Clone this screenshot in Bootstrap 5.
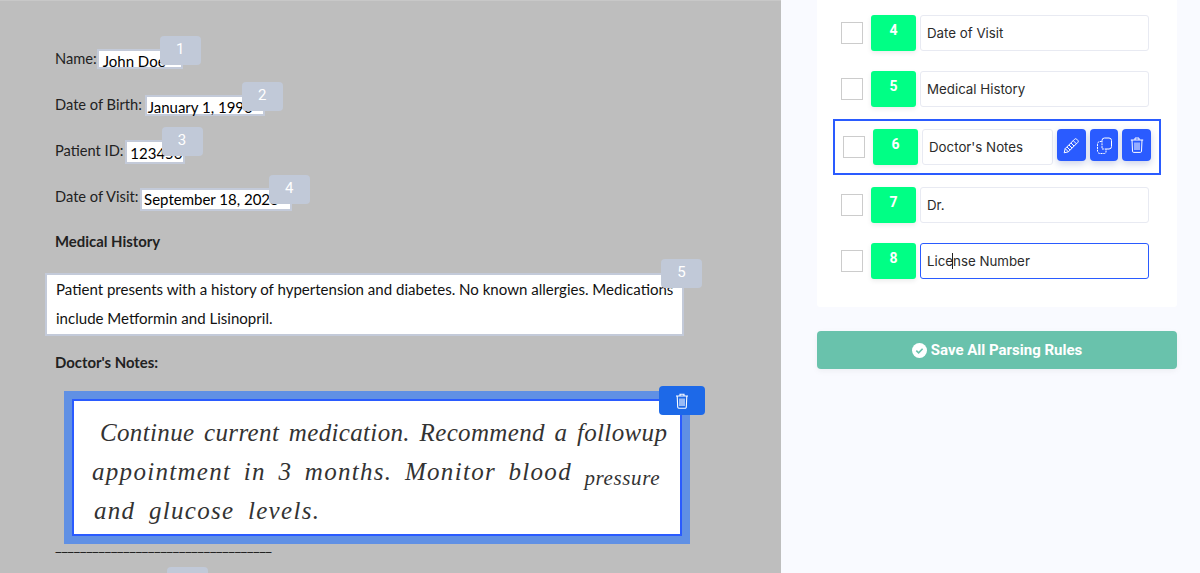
<!DOCTYPE html>
<html lang="en">
  <head>
    <meta charset="UTF-8" />
    <meta name="viewport" content="width=device-width, initial-scale=1" />
    <title>Parsing Rules</title>
    <link href="https://cdn.jsdelivr.net/npm/bootstrap@5.3.0/dist/css/bootstrap.min.css" rel="stylesheet" />
    <style>
      body { background: #f9faff; overflow: hidden; }
      .app-shell { height: 573px; }
      .doc-pane {
        width: 781px;
        height: 573px;
        background: #bebebe;
        box-shadow: inset 0 1px 0 #c8c8c8;
        font-family: Lato, "Liberation Sans", sans-serif;
        font-size: 14.67px;
        color: #222;
        padding: 0 0 0 55px;
      }
      .doc-row { height: 46px; line-height: 20px; }
      .doc-row:first-child { margin-top: 50px; }
      .doc-row.is-tight { height: 44px; }
      .doc-label { position: relative; top: -1px; }
      .doc-field {
        position: relative;
        display: inline-block;
        background: #fff;
        border: 2px solid #c3cad9;
        color: #000;
        font-size: 15px;
        vertical-align: top;
      }
      .field-name { margin-top: -1px; height: 20px; line-height: 20px; padding: 0 15px 0 4px; }
      .field-birth { margin: -1px 0 0 -1px; height: 21px; line-height: 20px; padding: 0 10px 0 1px; }
      .field-id { margin: -2px 0 0 -2px; height: 24px; line-height: 22px; padding: 0 0 0 3px; }
      .field-visit { margin-left: -2px; height: 23px; line-height: 18px; padding: 0 11px 0 2px; }
      .field-next { width: 135px; height: 21px; margin-top: 5px; }
      .doc-head { font-size: 14.9px; font-weight: 700; height: 41px; line-height: 18px; }
      .doc-head.is-notes { height: 38px; margin-top: 17px; }
      .doc-para {
        position: relative;
        width: 639px;
        height: 63px;
        margin-left: -10px;
        background: #fff;
        border: 2px solid #c3cad9;
        color: #111;
        font-size: 15.05px;
        padding: 0 9px;
        line-height: 29px;
        white-space: nowrap;
      }
      .tag-chip {
        position: absolute;
        top: -15px;
        right: -20px;
        width: 41px;
        height: 29px;
        background: #c1c9d8;
        border-radius: 4px;
        color: #fff;
        font-family: Roboto, sans-serif;
        font-size: 15px;
        line-height: 26px;
        text-align: center;
      }
      .doc-para .tag-chip { top: -16px; }
      .scan-box {
        position: relative;
        width: 626px;
        height: 153px;
        margin-left: 9px;
        border: 8px solid #6090e4;
      }
      .scan-inner {
        height: 100%;
        background: #fff;
        border: 2px solid #2a5bff;
        color: #333;
        font-family: "Liberation Serif", serif;
        font-style: italic;
        font-size: 25px;
        line-height: 39px;
        padding: 12px 0 0 26px;
        white-space: nowrap;
      }
      .scan-line1 { letter-spacing: .35px; word-spacing: 3px; }
      .scan-line2 { margin-left: -8px; letter-spacing: 1.3px; word-spacing: 5px; }
      .scan-line3 { margin-left: -6px; letter-spacing: 1.3px; word-spacing: 6px; }
      .scan-small { font-size: 21px; line-height: 0; vertical-align: -5px; letter-spacing: .6px; }
      .scan-del {
        position: absolute;
        top: -13px;
        right: -23px;
        width: 46px;
        height: 29px;
        background: #1d69e8;
        border-radius: 4px;
      }
      .doc-rule { line-height: 10px; height: 34px; color: #222; margin-top: -3px; white-space: nowrap; letter-spacing: -.54px; }
      .rules-pane {
        width: 419px;
        padding: 0 23px 0 36px;
        font-family: Inter, Roboto, sans-serif;
      }
      .rules-card { background: #fff; border-radius: 0 0 3px 3px; padding: 15px 28px 28px 24px; }
      .rule-row { height: 36px; margin-bottom: 20px; }
      .rule-row.is-last { margin-bottom: 0; }
      .rule-row.is-active {
        height: 56px;
        width: 328px;
        margin: -8px 0 12px -8px;
        padding: 8px 8px 0 8px;
        border: 2px solid #2a5bff;
        align-items: flex-start !important;
      }
      .rule-check {
        flex: none;
        width: 22px;
        height: 22px;
        border: 1px solid #ccc;
        background: #fff;
        margin-right: 8px;
      }
      .is-active .rule-check { margin-top: 7px; }
      .rule-num {
        flex: none;
        width: 45px;
        height: 36px;
        margin-right: 4px;
        background: #00ff85;
        border-radius: 3px;
        box-shadow: 0 2px 5px rgba(0, 0, 0, .08);
        color: #fff;
        font-family: Roboto, sans-serif;
        font-weight: 700;
        font-size: 14px;
        line-height: 30px;
        text-align: center;
      }
      .rule-input.form-control {
        width: 229px;
        height: 36px;
        padding: 0 6px;
        border: 1px solid #e8eaf2;
        border-radius: 3px;
        color: #2b2b2b;
        font-size: 13.3px;
      }
      .is-active .rule-input.form-control { width: 131px; }
      .rule-input.is-focus.form-control { border-color: #2a5bff; }
      .rule-caret { position: absolute; left: 32px; top: 10px; width: 1px; height: 16px; background: #222; }
      .rule-tool.btn {
        flex: none;
        width: 29px;
        height: 32px;
        padding: 0;
        margin-left: 4px;
        background: #2a5bff;
        border: 0;
        border-radius: 4px;
        box-shadow: 0 3px 7px rgba(30, 60, 160, .22);
      }
      .rule-tool.btn.is-mid { width: 28px; }
      .save-btn.btn {
        margin-top: 24px;
        height: 38px;
        padding: 0;
        background: #69c2ac;
        border: 0;
        border-radius: 4px;
        color: #fff;
        font-family: Roboto, sans-serif;
        font-weight: 700;
        font-size: 15px;
        box-shadow: 0 2px 6px rgba(0, 0, 0, .05);
      }
    </style>
  </head>
  <body>
    <div class="app-shell d-flex overflow-hidden">
      <!-- document preview -->
      <div class="doc-pane overflow-hidden">
        <div class="doc-row"><span class="doc-label">Name:</span><span class="doc-field field-name">John Doe<span class="tag-chip">1</span></span></div>
        <div class="doc-row"><span class="doc-label">Date of Birth:</span> <span class="doc-field field-birth">January 1, 1990<span class="tag-chip">2</span></span></div>
        <div class="doc-row"><span class="doc-label">Patient ID:</span> <span class="doc-field field-id">123456<span class="tag-chip">3</span></span></div>
        <div class="doc-row is-tight"><span class="doc-label">Date of Visit:</span> <span class="doc-field field-visit">September 18, 2023<span class="tag-chip">4</span></span></div>
        <div class="doc-head">Medical History</div>
        <div class="doc-para">
          Patient presents with a history of hypertension and diabetes. No known allergies. Medications<br />
          include Metformin and Lisinopril.
          <span class="tag-chip">5</span>
        </div>
        <div class="doc-head is-notes">Doctor's Notes:</div>
        <div class="scan-box">
          <div class="scan-inner">
            <div class="scan-line1">Continue current medication. Recommend a followup</div>
            <div class="scan-line2">appointment in 3 months. Monitor blood <span class="scan-small">pressure</span></div>
            <div class="scan-line3">and glucose levels.</div>
          </div>
          <div class="scan-del d-flex align-items-center justify-content-center">
            <svg width="14" height="16" viewBox="0 0 14 16" fill="none" stroke="#fff" stroke-width="1.1"><path d="M1 3h12M5 3V1.2h4V3M2.2 3l.5 11a1.2 1.2 0 0 0 1.2 1.2h6.2a1.2 1.2 0 0 0 1.2-1.2l.5-11M5 5.5v7.5M7 5.500v7.500M9 5.500v7.500"/></svg>
          </div>
        </div>
        <div class="doc-rule">___________________________________</div>
        <div class="doc-row"><span class="doc-field field-next"><span class="tag-chip">6</span></span></div>
      </div>

      <!-- parsing rules -->
      <div class="rules-pane d-flex flex-column">
        <div class="rules-card">
          <div class="rule-row d-flex align-items-center">
            <div class="rule-check"></div>
            <div class="rule-num">4</div>
            <input class="form-control rule-input" value="Date of Visit" />
          </div>
          <div class="rule-row d-flex align-items-center">
            <div class="rule-check"></div>
            <div class="rule-num">5</div>
            <input class="form-control rule-input" value="Medical History" />
          </div>
          <div class="rule-row is-active d-flex">
            <div class="rule-check"></div>
            <div class="rule-num">6</div>
            <input class="form-control rule-input" value="Doctor's Notes" />
            <button class="btn rule-tool d-flex align-items-center justify-content-center" type="button" aria-label="Edit">
              <svg width="17" height="17" viewBox="0 0 17 17" fill="none" stroke="#fff" stroke-width="1"><path d="M1.2 15.800l1-4.200L11.600 2.200a1.500 1.500 0 0 1 2.100 0l1.100 1.100a1.500 1.500 0 0 1 0 2.100L5.400 14.800zM2.200 11.600l3.200 3.200M10.200 3.600l3.200 3.200M4 10l3 3M6 8l3 3M8 6l3 3"/></svg>
            </button>
            <button class="btn rule-tool is-mid d-flex align-items-center justify-content-center" type="button" aria-label="Copy">
              <svg width="15" height="17" viewBox="0 0 15 17" fill="none" stroke="#fff" stroke-width="1"><path d="M5 3.500a2.500 2.500 0 0 1 2.500-2.500H12a2.500 2.500 0 0 1 2.500 2.500v6a2.500 2.500 0 0 1-2.500 2.500H9"/><path d="M5 3.500v8.500h4V15a1.500 1.500 0 0 1-1.500 1.500H3A2.500 2.500 0 0 1 .5 14V7A2.500 2.500 0 0 1 3 4.500h2" stroke-dasharray="2 .8"/></svg>
            </button>
            <button class="btn rule-tool d-flex align-items-center justify-content-center" type="button" aria-label="Delete">
              <svg width="14" height="16" viewBox="0 0 14 16" fill="none" stroke="#fff" stroke-width="1"><path d="M.8 3h12.400M5 3V1h4v2M2 3l.5 11.200A1.200 1.200 0 0 0 3.700 15.400h6.600a1.200 1.200 0 0 0 1.200-1.200L12 3M5 5.500v7.500M7 5.500v7.500M9 5.500v7.500"/></svg>
            </button>
          </div>
          <div class="rule-row d-flex align-items-center">
            <div class="rule-check"></div>
            <div class="rule-num">7</div>
            <input class="form-control rule-input" value="Dr." />
          </div>
          <div class="rule-row is-last d-flex align-items-center">
            <div class="rule-check"></div>
            <div class="rule-num">8</div>
            <div class="position-relative">
              <input class="form-control rule-input is-focus" value="License Number" />
              <span class="rule-caret"></span>
            </div>
          </div>
        </div>
        <button class="btn save-btn d-flex align-items-center justify-content-center gap-1" type="button">
          <svg width="15" height="15" viewBox="0 0 15 15"><circle cx="7.500" cy="7.500" r="7.500" fill="#fff"/><path d="M4.300 7.700l2.300 2.200 4-4.200" fill="none" stroke="#69c2ac" stroke-width="1.600"/></svg>
          Save All Parsing Rules
        </button>
      </div>
    </div>
    <script src="https://cdn.jsdelivr.net/npm/bootstrap@5.3.0/dist/js/bootstrap.bundle.min.js"></script>
  </body>
</html>
